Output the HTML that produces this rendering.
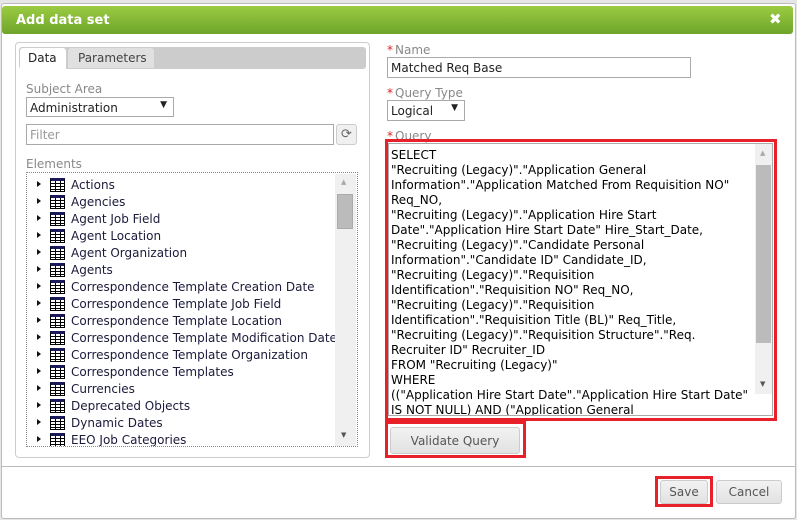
<!DOCTYPE html>
<html><head><meta charset="utf-8"><style>
*{box-sizing:border-box;margin:0;padding:0}
body{width:797px;height:520px;background:#e6e6e6;font-family:"DejaVu Sans","Liberation Sans",sans-serif;font-size:12px;position:relative;overflow:hidden;color:#222}
.abs{position:absolute}
.dlg{left:1px;top:3px;width:795px;height:516px;background:#fff;border:1px solid #bbb;border-radius:3px}
.hdr{left:2px;top:6px;width:791px;height:28px;background:linear-gradient(#9ccb42,#6ea52a);border-radius:3px;color:#fff;font-weight:bold;font-size:13px;padding:7px 0 0 14px}
.lbl{color:#888;font-size:12px}
.star{color:#e02020;margin-right:2px}
.inp{border:1px solid #aaa;background:#fff;padding:3px 3px 1px;font-size:12px}
.tree div{height:17px;line-height:18px;position:relative;padding-left:44px;color:#1a1a3a;white-space:nowrap}
.tree div:before{content:"";position:absolute;left:10px;top:5px;border-left:4px solid #111;border-top:3.5px solid transparent;border-bottom:3.5px solid transparent}
.tree i{position:absolute;left:23px;top:2px;width:15px;height:14px;border:1px solid #000;border-top:3px solid #1a1a5a;background:
linear-gradient(90deg,transparent 4px,#000 4px,#000 5px,transparent 5px,transparent 9px,#000 9px,#000 10px,transparent 10px),
repeating-linear-gradient(180deg,#fff 0,#fff 2px,#000 2px,#000 3px)}
.ta{left:388px;top:143px;width:385px;height:273px;border:1px solid #aaa;line-height:15px;padding:4px 0 0 2px;overflow:hidden;color:#000;white-space:nowrap}
.btn{background:linear-gradient(#f2f2f2,#e2e2e2);border:1px solid #ccc;border-radius:3px;color:#555;text-align:center;font-size:12px}
.red{border:3px solid #e8202a}
</style></head><body>
<div class="abs dlg"></div>
<div class="abs hdr">Add data set</div>
<div class="abs" style="left:769px;top:10px;color:#fff;font-weight:bold;font-size:15px">✖</div>

<div class="abs" style="left:15px;top:42px;width:355px;height:416px;border:1px solid #ccc;border-radius:4px"></div>
<div class="abs" style="left:19px;top:47px;width:347px;height:22px;background:#ccc;border-radius:3px"></div>
<div class="abs" style="left:20px;top:48px;width:46px;height:22px;background:#fff;border-radius:3px 3px 0 0;padding:3px 0 0 8px">Data</div>
<div class="abs" style="left:68px;top:48px;width:86px;height:20px;background:#e0e0e0;border-radius:3px 3px 0 0;padding:3px 0 0 10px;color:#444">Parameters</div>

<div class="abs lbl" style="left:26px;top:82px">Subject Area</div>
<div class="abs inp" style="left:26px;top:97px;width:148px;height:20px;color:#222">Administration<span style="position:absolute;right:6px;top:2px;font-size:9px">▼</span></div>
<div class="abs inp" style="left:26px;top:124px;width:308px;height:21px;color:#999">Filter</div>
<div class="abs" style="left:336px;top:124px;width:21px;height:21px;border:1px solid #ccc;border-radius:3px;background:#f0f0f0;color:#666;text-align:center;font-size:13px;line-height:19px">⟳</div>
<div class="abs lbl" style="left:26px;top:157px">Elements</div>
<div class="abs" style="left:26px;top:172px;width:332px;height:275px;border:1px dotted #888"></div>
<div class="abs tree" style="left:27px;top:176px;width:308px;height:270px;overflow:hidden">
<div><i></i>Actions</div><div><i></i>Agencies</div><div><i></i>Agent Job Field</div><div><i></i>Agent Location</div><div><i></i>Agent Organization</div><div><i></i>Agents</div><div><i></i>Correspondence Template Creation Date</div><div><i></i>Correspondence Template Job Field</div><div><i></i>Correspondence Template Location</div><div><i></i>Correspondence Template Modification Date</div><div><i></i>Correspondence Template Organization</div><div><i></i>Correspondence Templates</div><div><i></i>Currencies</div><div><i></i>Deprecated Objects</div><div><i></i>Dynamic Dates</div><div><i></i>EEO Job Categories</div>
</div>
<div class="abs" style="left:335px;top:174px;width:21px;height:272px;background:#f0f0f0"></div>
<div class="abs" style="left:337px;top:194px;width:16px;height:35px;background:#bbb;border:1px solid #aaa"></div>
<div class="abs" style="left:341px;top:178px;font-size:7px;color:#aaa">▲</div>
<div class="abs" style="left:341px;top:431px;font-size:7px;color:#555">▼</div>

<div class="abs" style="left:387px;top:43px"><span class="star">*</span><span class="lbl">Name</span></div>
<div class="abs inp" style="left:387px;top:57px;width:304px;height:21px;color:#222">Matched Req Base</div>
<div class="abs" style="left:387px;top:86px"><span class="star">*</span><span class="lbl">Query Type</span></div>
<div class="abs inp" style="left:387px;top:100px;width:78px;height:21px;color:#222">Logical<span style="position:absolute;right:6px;top:2px;font-size:9px">▼</span></div>
<div class="abs" style="left:387px;top:129px"><span class="star">*</span><span class="lbl">Query</span></div>
<div class="abs ta">SELECT<br>"Recruiting (Legacy)"."Application General<br>Information"."Application Matched From Requisition NO"<br>Req_NO,<br>"Recruiting (Legacy)"."Application Hire Start<br>Date"."Application Hire Start Date" Hire_Start_Date,<br>"Recruiting (Legacy)"."Candidate Personal<br>Information"."Candidate ID" Candidate_ID,<br>"Recruiting (Legacy)"."Requisition<br>Identification"."Requisition NO" Req_NO,<br>"Recruiting (Legacy)"."Requisition<br>Identification"."Requisition Title (BL)" Req_Title,<br>"Recruiting (Legacy)"."Requisition Structure"."Req.<br>Recruiter ID" Recruiter_ID<br>FROM "Recruiting (Legacy)"<br>WHERE<br>(("Application Hire Start Date"."Application Hire Start Date"<br>IS NOT NULL) AND ("Application General</div>
<div class="abs" style="left:755px;top:144px;width:17px;height:250px;background:#f0f0f0"></div>
<div class="abs" style="left:756px;top:165px;width:15px;height:178px;background:#bbb"></div>
<div class="abs" style="left:760px;top:149px;font-size:7px;color:#aaa">▲</div>
<div class="abs" style="left:760px;top:380px;font-size:7px;color:#555">▼</div>
<div class="abs red" style="left:385px;top:139px;width:392px;height:282px"></div>

<div class="abs btn" style="left:390px;top:427px;width:130px;height:27px;line-height:26px">Validate Query</div>
<div class="abs red" style="left:385px;top:421px;width:141px;height:37px"></div>

<div class="abs" style="left:2px;top:466px;width:793px;height:1px;background:#bbb"></div>
<div class="abs btn" style="left:660px;top:480px;width:48px;height:24px;line-height:23px">Save</div>
<div class="abs red" style="left:655px;top:476px;width:58px;height:31px"></div>
<div class="abs btn" style="left:716px;top:480px;width:66px;height:24px;line-height:23px">Cancel</div>
</body></html>
